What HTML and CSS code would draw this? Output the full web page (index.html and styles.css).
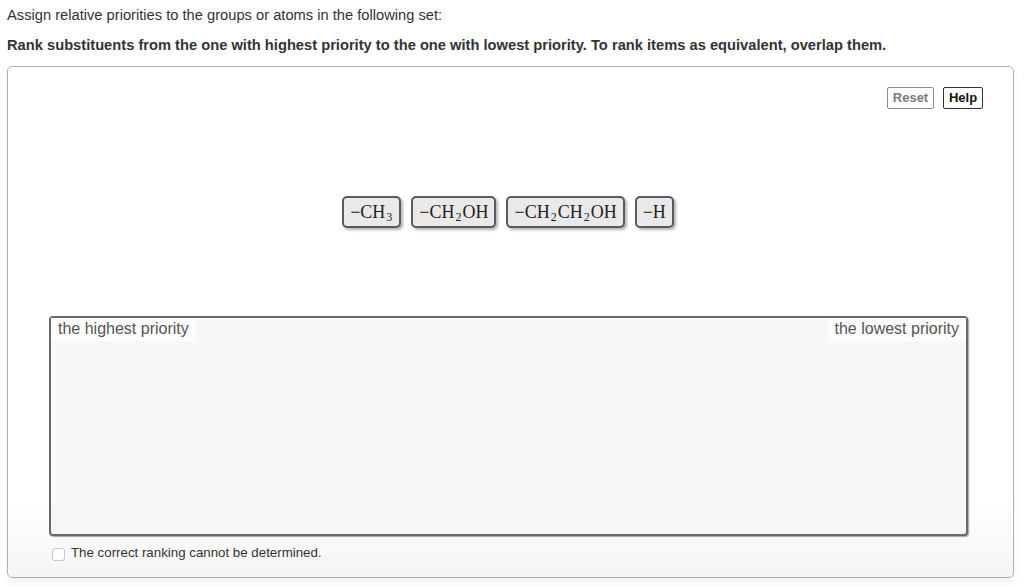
FILE: index.html
```html
<!DOCTYPE html>
<html>
<head>
<meta charset="utf-8">
<link rel="stylesheet" href="styles.css">
</head>
<body>
<p class="intro">Assign relative priorities to the groups or atoms in the following set:</p>
<p class="instr">Rank substituents from the one with highest priority to the one with lowest priority. To rank items as equivalent, overlap them.</p>
<div class="panel">
  <div class="toolbar">
    <button class="btn btn-reset">Reset</button>
    <button class="btn btn-help">Help</button>
  </div>
  <div class="tiles">
    <div class="tile">&minus;CH<sub>3</sub></div>
    <div class="tile">&minus;CH<sub>2</sub>OH</div>
    <div class="tile">&minus;CH<sub>2</sub>CH<sub>2</sub>OH</div>
    <div class="tile">&minus;H</div>
  </div>
  <div class="zone">
    <span class="zlabel">the highest priority</span>
    <span class="zlabel">the lowest priority</span>
  </div>
  <label class="check">
    <span class="box"></span>
    <span class="ctext">The correct ranking cannot be determined.</span>
  </label>
</div>
</body>
</html>
```

FILE: styles.css
```css
html, body {
  margin: 0;
  padding: 0;
  background: #fff;
}
body {
  font-family: "Liberation Sans", Arial, Helvetica, sans-serif;
  color: #333;
  width: 1024px;
  height: 587px;
  overflow: hidden;
}
.intro {
  margin: 0;
  padding: 7px 0 0 7px;
  font-size: 14.7px;
  line-height: 17px;
}
.instr {
  margin: 13px 0 0 0;
  padding-left: 7px;
  font-size: 14.7px;
  line-height: 17px;
  font-weight: bold;
}
.panel {
  margin: 12px 0 0 7px;
  width: 1005px;
  height: 510px;
  border: 1px solid #b0b0b0;
  border-radius: 5px;
  background: linear-gradient(to bottom, #fff 0%, #fff 85%, #f5f5f5 100%);
  box-shadow: 0 5px 8px rgba(0,0,0,0.05);
  display: flex;
  flex-direction: column;
}
.toolbar {
  display: flex;
  justify-content: flex-end;
  gap: 9px;
  padding: 20px 30px 0 0;
}
.btn {
  font-family: "Liberation Sans", Arial, sans-serif;
  font-size: 13px;
  font-weight: bold;
  height: 22px;
  padding: 0 4px;
  background: #fff;
  border: 1px solid #333;
  border-radius: 2px;
  line-height: 18px;
}
.btn-reset {
  color: #7a7a7a;
  border-color: #8c8c8c;
  width: 47px;
}
.btn-help {
  color: #111;
  width: 40px;
}
.tiles {
  display: flex;
  justify-content: center;
  gap: 10px;
  margin-top: 87px;
  padding-right: 5px;
}
.tile {
  font-family: "Liberation Serif", "Times New Roman", serif;
  font-size: 18px;
  color: #222;
  height: 28px;
  line-height: 28px;
  padding: 0 6px;
  background: #e9e9e9;
  border: 2px solid #5a5a62;
  border-radius: 5px;
  box-shadow: 2px 2px 3px rgba(0,0,0,0.3);
  white-space: nowrap;
}
.tile sub {
  font-size: 12px;
  vertical-align: -3px;
  line-height: 0;
  margin-left: 1px;
  margin-right: 1px;
}
.zone {
  margin: 88px 0 0 41px;
  width: 915px;
  height: 216px;
  border: 2px solid #686872;
  border-radius: 4px;
  background: #f7f7f7;
  box-shadow: 1px 1px 1px rgba(0,0,0,0.35);
  display: flex;
  justify-content: space-between;
  align-items: flex-start;
}
.zlabel {
  font-size: 16px;
  color: #555;
  background: #fcfcfc;
  padding: 2px 7px 3px 7px;
  line-height: 18px;
}
.check {
  display: flex;
  align-items: center;
  margin: 7px 0 0 44px;
}
.box {
  width: 11px;
  height: 11px;
  border: 1px solid #c4c4c4;
  border-radius: 3px;
  background: #fff;
  margin-top: 5px;
}
.ctext {
  font-size: 13.3px;
  color: #333;
  margin-left: 6px;
}
```
